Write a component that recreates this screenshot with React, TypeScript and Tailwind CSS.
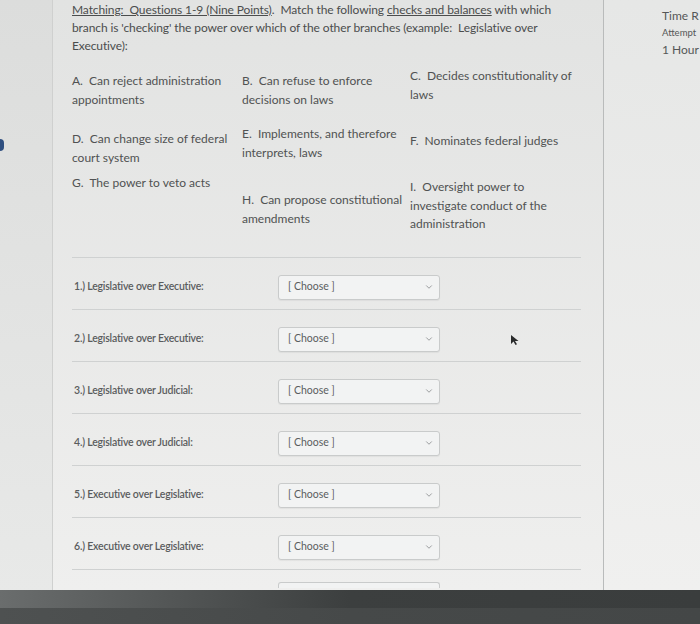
import { ChevronDown } from 'lucide-react';

const questions = [
  '1.) Legislative over Executive:',
  '2.) Legislative over Executive:',
  '3.) Legislative over Judicial:',
  '4.) Legislative over Judicial:',
  '5.) Executive over Legislative:',
  '6.) Executive over Legislative:',
];

const ChooseBox = () => (
  <div className="w-[162px] h-[25px] border border-[#c9cbcb] rounded-[3px] bg-[#f2f3f3] flex items-center justify-between pl-[9px] pr-[5px] shadow-[0_1px_1px_rgba(0,0,0,0.05)]">
    <span className="text-[10.5px] text-[#5a5d5e]">[ Choose ]</span>
    <ChevronDown className="h-[10px] w-[10px] text-[#8a8d8e]" strokeWidth={2} />
  </div>
);

const App = () => {
  return (
    <div
      className="relative w-[700px] h-[624px] overflow-hidden flex flex-col bg-[#e4e5e4]"
      style={{ fontFamily: 'Lato, "Open Sans", sans-serif' }}
    >
      <div className="flex flex-1 min-h-0">
        {/* left margin */}
        <div className="w-[53px] shrink-0 bg-gradient-to-b from-[#dcdddc] to-[#e8e9e8] border-r border-[#cfd0cf]" />

        {/* main column */}
        <div className="w-[551px] shrink-0 pl-[19px] pr-[22px] bg-gradient-to-b from-[#e2e3e2] to-[#efefee] border-r border-[#b9bbbb] flex flex-col">
          <p className="pt-[1px] text-[12px] leading-[18px] text-[#4b4d4d] w-[480px] tracking-[-0.1px]">
            <span className="underline">Matching:&nbsp; Questions 1-9 (Nine Points)</span>.&nbsp; Match the following{' '}
            <span className="underline">checks and balances</span> with which branch is 'checking' the power over which of the other branches (example:&nbsp; Legislative over Executive):
          </p>

          <div className="mt-[12px] text-[12px] leading-[18.5px] text-[#505252]">
            <div className="grid grid-cols-[170px_168px_1fr] h-[56px]">
              <div className="pt-[5px] pr-[10px]">A.&nbsp; Can reject administration appointments</div>
              <div className="pt-[5px] pr-[10px]">B.&nbsp; Can refuse to enforce decisions on laws</div>
              <div className="whitespace-nowrap">C.&nbsp; Decides constitutionality of<br />laws</div>
            </div>
            <div className="grid grid-cols-[170px_168px_1fr] h-[48px]">
              <div className="pt-[7px] pr-[2px]">D.&nbsp; Can change size of federal court system</div>
              <div className="pt-[2px] pr-[2px]">E.&nbsp; Implements, and therefore interprets, laws</div>
              <div className="pt-[9px]">F.&nbsp; Nominates federal judges</div>
            </div>
            <div className="grid grid-cols-[170px_168px_1fr] h-[80px]">
              <div className="pt-[3px]">G.&nbsp; The power to veto acts</div>
              <div className="pt-[20px] whitespace-nowrap">H.&nbsp; Can propose constitutional<br />amendments</div>
              <div className="pt-[7px] pr-[20px]">I.&nbsp; Oversight power to investigate conduct of the administration</div>
            </div>
          </div>

          <div className="mt-[6px] border-t border-[#cfd1d1]">
            {questions.map((q) => (
              <div key={q} className="h-[52px] pt-[7px] border-b border-[#cfd1d1] flex items-center pl-[2px]">
                <span className="w-[204px] text-[10.5px] text-[#5a5c5d] font-semibold tracking-[-0.2px]">{q}</span>
                <ChooseBox />
              </div>
            ))}
            <div className="pt-[12px] pl-[206px]">
              <div className="w-[162px] h-[6px] border-t border-x border-[#c9cbcb] rounded-t-[3px] bg-[#f2f3f3]" />
            </div>
          </div>
        </div>

        {/* right sidebar */}
        <div className="flex-1 bg-gradient-to-b from-[#e6e7e6] to-[#f0f0ef] pl-[58px] pt-[7px] whitespace-nowrap overflow-hidden text-[#555757]">
          <div className="text-[12px] leading-[18px]">Time R</div>
          <div className="text-[9.5px] leading-[14px] mt-[1px]">Attempt</div>
          <div className="text-[12px] leading-[18px] mt-[1px]">1 Hour</div>
        </div>
      </div>

      {/* bottom dark bar */}
      <div className="h-[34px] shrink-0 flex flex-col">
        <div className="h-[18px] bg-gradient-to-r from-[#6a6d6d] via-[#3c3f3f] to-[#3a3d3d]" />
        <div className="flex-1 bg-gradient-to-r from-[#4e5151] via-[#464949] to-[#444747]" />
      </div>

      {/* cursor */}
      <svg className="absolute left-[510px] top-[334px]" width="10" height="12" viewBox="0 0 10 12">
        <path d="M1 1 L1 10 L3.5 7.5 L5.5 11 L7 10.3 L5 7 L8.5 7 Z" fill="#2a2b2b" />
      </svg>

      {/* blue dot peeking at left edge */}
      <div className="absolute -left-[4px] top-[139px] w-[8px] h-[12px] rounded-full bg-[#2f4f80]" />
    </div>
  );
};

export default App;
